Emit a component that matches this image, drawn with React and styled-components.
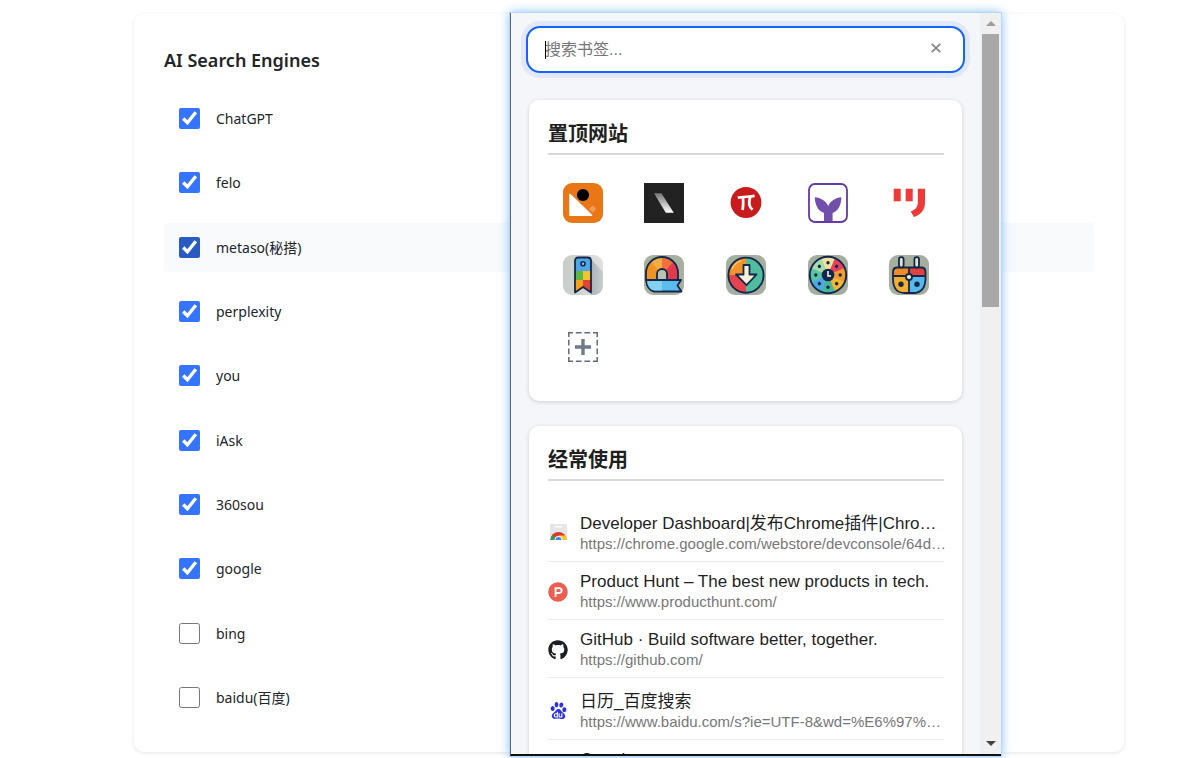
import React, {useState} from 'react';
import styled, {createGlobalStyle} from 'styled-components';
import {FaGithub, FaProductHunt} from 'react-icons/fa';
import {SiBaidu} from 'react-icons/si';

const NAVY = '#14264a';

const engines = [
    {id: 'chatgpt', label: 'ChatGPT', on: true},
    {id: 'felo', label: 'felo', on: true},
    {id: 'metaso', label: 'metaso(秘搭)', on: true, active: true},
    {id: 'perplexity', label: 'perplexity', on: true},
    {id: 'you', label: 'you', on: true},
    {id: 'iask', label: 'iAsk', on: true},
    {id: '360sou', label: '360sou', on: true},
    {id: 'google', label: 'google', on: true},
    {id: 'bing', label: 'bing', on: false},
    {id: 'baidu', label: 'baidu(百度)', on: false},
];

const bookmarks = [
    {
        title: 'Developer Dashboard|发布Chrome插件|Chrome Web Store',
        url: 'https://chrome.google.com/webstore/devconsole/64d0c1f8',
        icon: <WebStoreIcon/>,
        tall: true,
    },
    {
        title: 'Product Hunt – The best new products in tech.',
        url: 'https://www.producthunt.com/',
        icon: <FaProductHunt size={20} color="#ec5f50"/>,
    },
    {
        title: 'GitHub · Build software better, together.',
        url: 'https://github.com/',
        icon: <FaGithub size={20} color="#1b1f23"/>,
    },
    {
        title: '日历_百度搜索',
        url: 'https://www.baidu.com/s?ie=UTF-8&wd=%E6%97%A5%E5%8E%86',
        icon: <SiBaidu size={17} color="#2a32e0"/>,
        tall: true,
    },
    {
        title: 'Google',
        url: 'https://www.google.com/',
        icon: null,
    },
];

const sites = [
    {name: 'Shapes', Icon: ShapesIcon},
    {name: 'Slash', Icon: SlashIcon},
    {name: 'Pi', Icon: PiIcon},
    {name: 'Whale', Icon: WhaleIcon},
    {name: 'Strokes', Icon: StrokesIcon},
    {name: 'Bookmark', Icon: BookmarkIcon},
    {name: 'Arch', Icon: ArchIcon},
    {name: 'Download', Icon: DownloadIcon},
    {name: 'Clock', Icon: ClockIcon},
    {name: 'Calendar', Icon: CalendarIcon},
];

function WebStoreIcon() {
    return (
        <svg width="17" height="16" viewBox="0 0 17 16">
            <path d="M0 0H17V16H0Z" fill="#e6e6e6"/>
            <rect x="5" y="2" width="7" height="1.6" rx=".8" fill="#fff"/>
            <path d="M.5 16A8 8 0 0 1 16.5 16Z" fill="#d93a2e"/>
            <path d="M.5 16A8 8 0 0 1 2.6 10.8L6 16Z" fill="#2f9e4f"/>
            <path d="M8.5 11.6H15.2A8 8 0 0 1 16.5 16H9Z" fill="#f9c623"/>
            <path d="M4.6 16A3.9 3.9 0 0 1 12.4 16Z" fill="#fff"/>
            <path d="M5.5 16A3 3 0 0 1 11.5 16Z" fill="#4a83f0"/>
        </svg>
    );
}

function ShapesIcon() {
    return (
        <SiteSvg viewBox="0 0 40 40">
            <rect width="40" height="40" rx="9" fill="#e97716"/>
            <path d="M29.7 22.2L33.4 25.9L29.7 29.6L26 25.9Z" fill="#f09c55"/>
            <path d="M7 11.5V32.3H28.5Z" fill="#fff" stroke="#fff" strokeWidth="1.6" strokeLinejoin="round"/>
            <circle cx="20" cy="12" r="6.1" fill="#000"/>
        </SiteSvg>
    );
}

function SlashIcon() {
    return (
        <SiteSvg viewBox="0 0 40 40">
            <defs>
                <linearGradient id="slash" x1="0" y1="0" x2="0" y2="1">
                    <stop offset="0" stopColor="#777"/>
                    <stop offset="1" stopColor="#fff"/>
                </linearGradient>
            </defs>
            <rect width="40" height="40" fill="#222"/>
            <path d="M10 10.3H17.4L29.8 29.8H21.8Z" fill="url(#slash)"/>
        </SiteSvg>
    );
}

function PiIcon() {
    return (
        <SiteSvg viewBox="0 0 40 40">
            <circle cx="20" cy="19.5" r="15.4" fill="#c71b1c"/>
            <g fill="none" stroke="#fff">
                <path d="M11.8 14.8C16 13.4 23 14 28.6 12.9" strokeWidth="2.6"/>
                <path d="M16.8 14.4C17.6 18 17.2 22.5 16.6 27" strokeWidth="2.8"/>
                <path d="M24.2 14C22.6 19 22.4 24 26.6 26.6" strokeWidth="2.8"/>
            </g>
        </SiteSvg>
    );
}

function WhaleIcon() {
    return (
        <SiteSvg viewBox="0 0 40 40">
            <rect x="1" y="1" width="38" height="38" rx="6" fill="#fff" stroke="#6439a8" strokeWidth="1.8"/>
            <path d="M16 38V30C10 28 7 22 6.8 14.3C13 14.8 18 18 20.2 23C22.4 18 27.4 14.8 33.4 14.3C33.2 22 30.4 28 24.6 30V38Z" fill="#7150ab"/>
        </SiteSvg>
    );
}

function StrokesIcon() {
    return (
        <SiteSvg viewBox="0 0 40 40">
            <g fill="#f03a38">
                <rect x="4.7" y="5.7" width="7" height="12.6"/>
                <rect x="16.7" y="5.7" width="7" height="12.6"/>
                <path d="M28.8 5.7H36V19C36 27 32 31.6 25 34L21.8 28.4C26.6 26.6 28.8 24 28.8 19Z"/>
            </g>
        </SiteSvg>
    );
}

function BookmarkIcon() {
    return (
        <SiteSvg viewBox="0 0 40 40">
            <defs>
                <linearGradient id="stone" x1="0" y1="0" x2="1" y2="0">
                    <stop offset="0" stopColor="#c6cdc8"/>
                    <stop offset="1" stopColor="#dfe0df"/>
                </linearGradient>
                <linearGradient id="shade" x1="0" y1="0" x2="1" y2="0">
                    <stop offset="0" stopColor="#a7b0b4"/>
                    <stop offset="1" stopColor="#c9cdce"/>
                </linearGradient>
                <clipPath id="tile"><rect width="40" height="40" rx="9"/></clipPath>
                <clipPath id="ribbon"><path d="M12 6Q12 2.5 15.5 2.5H24.5Q28 2.5 28 6V37.6L20 32L12 37.6Z"/></clipPath>
            </defs>
            <g clipPath="url(#tile)">
                <rect width="40" height="40" fill="url(#stone)"/>
                <path d="M27 3L40 17V40H28Z" fill="url(#shade)"/>
                <g clipPath="url(#ribbon)">
                    <rect x="11" width="18" height="16" fill="#4ea6e6"/>
                    <rect x="11" y="16" width="9" height="9" fill="#62b646"/>
                    <rect x="20" y="16" width="9" height="9" fill="#f3c52c"/>
                    <rect x="11" y="25" width="9" height="14" fill="#f5a31f"/>
                    <rect x="20" y="25" width="9" height="14" fill="#e04434"/>
                </g>
                <path d="M12 6Q12 2.5 15.5 2.5H24.5Q28 2.5 28 6V37.6L20 32L12 37.6Z" fill="none" stroke={NAVY} strokeWidth="1.8" strokeLinejoin="round"/>
                <circle cx="20" cy="8.8" r="2" fill="#8ccbf2" stroke={NAVY} strokeWidth="1.6"/>
            </g>
        </SiteSvg>
    );
}

function ArchIcon() {
    return (
        <SiteSvg viewBox="0 0 40 40">
            <rect width="40" height="40" rx="9" fill="#a6b19f"/>
            <path d="M2 25V18A16 16 0 0 1 18 2V14A5 5 0 0 0 13 19V25Z" fill="#f09322"/>
            <path d="M7 7Q12 2 18 2V14Q16 14 14.5 15.5Z" fill="#f6ab45"/>
            <path d="M18 2A16 16 0 0 1 34 18V25H23V19A5 5 0 0 0 18 14Z" fill="#e23b4d"/>
            <path d="M18 2Q24.5 2 29.5 7L21.5 15.5Q20 14 18 14Z" fill="#f2703d"/>
            <path d="M13 25V19A5 5 0 0 1 23 19V25Z" fill="#b9c2b0"/>
            <g fill="none" stroke={NAVY} strokeWidth="1.8" strokeLinejoin="round">
                <path d="M2 25V18A16 16 0 0 1 34 18V25"/>
                <path d="M13 25V19A5 5 0 0 1 23 19V25"/>
            </g>
            <path d="M2 25H37L33.5 30.5L37.5 36.5H10Q3 35 2 25Z" fill="#5cbcec" stroke={NAVY} strokeWidth="1.8" strokeLinejoin="round"/>
            <path d="M18 26V35.6H10.5Q5 34 3.5 29V26Z" fill="#82d0f2"/>
        </SiteSvg>
    );
}

function DownloadIcon() {
    return (
        <SiteSvg viewBox="0 0 40 40">
            <rect width="40" height="40" rx="9" fill="#a4af9f"/>
            <path d="M20 2.5A17.6 17.6 0 0 0 2.4 20H20Z" fill="#f0952a"/>
            <path d="M2.4 20A17.6 17.6 0 0 0 20 37.7V20Z" fill="#e6434f"/>
            <path d="M20 2.5A17.6 17.6 0 0 1 20 37.7Z" fill="#50bd9f"/>
            <circle cx="20" cy="20.2" r="17.6" fill="none" stroke={NAVY} strokeWidth="1.9"/>
            <path d="M6 14A15.5 15.5 0 0 1 15 5.6" fill="none" stroke="#f9c676" strokeWidth="1.2"/>
            <path d="M17.5 10H23.5V19.5H30.5L20.5 30.2L10 19.5H17.5Z" fill="#f6f0da" stroke={NAVY} strokeWidth="1.8" strokeLinejoin="round"/>
        </SiteSvg>
    );
}

const wheelColors = ['#f3e3a0', '#e6405a', '#f39a32', '#f2b534', '#45b79c', '#4ea8e4', '#59c5a5', '#a5dcae'];

function ClockIcon() {
    return (
        <SiteSvg viewBox="0 0 40 40">
            <rect width="40" height="40" rx="9" fill="#a3ae9f"/>
            {wheelColors.map((color, i) => (
                <g key={color} transform={`rotate(${i * 45} 20 20)`}>
                    <path d="M20 20L13 3A18.4 18.4 0 0 1 27 3Z" fill={color}/>
                    <circle cx="20" cy="7.8" r="1.7" fill={NAVY}/>
                </g>
            ))}
            <circle cx="20" cy="20" r="18.2" fill="none" stroke={NAVY} strokeWidth="1.9"/>
            <circle cx="20" cy="20" r="6.3" fill={NAVY}/>
            <path d="M20 16V21H23" fill="none" stroke="#fff" strokeWidth="1.5"/>
        </SiteSvg>
    );
}

function CalendarIcon() {
    return (
        <SiteSvg viewBox="0 0 40 40">
            <defs>
                <clipPath id="calBody"><path d="M4 17Q4 12.5 8.5 12.5H32Q36.5 12.5 36.5 17V24Q36 38 24 38H16Q4 38 4 24Z"/></clipPath>
            </defs>
            <rect width="40" height="40" rx="9" fill="#a4af9f"/>
            <g clipPath="url(#calBody)">
                <rect x="3" y="12" width="17" height="9" fill="#ee8d25"/>
                <rect x="20" y="12" width="17" height="9" fill="#e2423f"/>
                <rect x="3" y="21" width="17" height="18" fill="#f3ae2f"/>
                <rect x="20" y="21" width="17" height="18" fill="#55b9ec"/>
            </g>
            <g stroke={NAVY} strokeWidth="1.8">
                <path d="M4 17Q4 12.5 8.5 12.5H32Q36.5 12.5 36.5 17V24Q36 38 24 38H16Q4 38 4 24Z" fill="none"/>
                <path d="M4 21H36.5M20 12.5V38" fill="none"/>
                <rect x="10" y="2.2" width="4.6" height="10.3" rx="2.3" fill="#dfe5d6"/>
                <rect x="25.4" y="2.2" width="4.6" height="10.3" rx="2.3" fill="#dfe5d6"/>
                <circle cx="20" cy="22" r="3" fill="#f6f0da"/>
            </g>
            <circle cx="12" cy="29.3" r="2.7" fill={NAVY}/>
            <circle cx="28" cy="29.3" r="2.7" fill={NAVY}/>
        </SiteSvg>
    );
}

function AddIcon() {
    return (
        <svg width="30" height="30" viewBox="0 0 30 30" fill="none">
            <path
                d="M0 .8H30M0 29.2H30M.8 0V30M29.2 0V30"
                stroke="#5f6c80"
                strokeWidth="1.5"
                strokeDasharray="5 2.8 5.8 2.8 5.8 2.8 5 100"
            />
            <path d="M15 7V23M7 15H23" stroke="#6f7b8a" strokeWidth="3.4"/>
        </svg>
    );
}

function EngineList() {
    const [checked, setChecked] = useState(engines.filter(e => e.on).map(e => e.id));
    const toggle = (id) => {
        setChecked(checked.includes(id) ? checked.filter(c => c !== id) : [...checked, id]);
    };
    return (
        <Card>
            <CardTitle>AI Search Engines</CardTitle>
            <Engines>
                {engines.map(({id, label, active}) => (
                    <Engine key={id} $active={active}>
                        <Check
                            type="checkbox"
                            id={id}
                            $active={active}
                            checked={checked.includes(id)}
                            onChange={() => toggle(id)}
                        />
                        <label htmlFor={id}>{label}</label>
                    </Engine>
                ))}
            </Engines>
        </Card>
    );
}

function BookmarkPopup() {
    const [query, setQuery] = useState('');
    return (
        <Popup>
            <PopupBody>
                <SearchBox>
                    <SearchInput
                        aria-label="搜索书签"
                        placeholder="搜索书签..."
                        value={query}
                        onChange={e => setQuery(e.target.value)}
                    />
                    {!query && <Caret/>}
                    <ClearButton type="button" aria-label="清除" onClick={() => setQuery('')}>
                        <svg width="10" height="10" viewBox="0 0 10 10">
                            <path d="M.8 .8L9.2 9.2M9.2 .8L.8 9.2" stroke="#888" strokeWidth="1.8"/>
                        </svg>
                    </ClearButton>
                </SearchBox>
                <Section>
                    <SectionTitle>置顶网站</SectionTitle>
                    <SiteGrid>
                        {sites.map(({name, Icon}) => (
                            <Site key={name} href="#" aria-label={name}><Icon/></Site>
                        ))}
                        <AddButton type="button" aria-label="添加"><AddIcon/></AddButton>
                    </SiteGrid>
                </Section>
                <Section>
                    <SectionTitle>经常使用</SectionTitle>
                    <BookmarkList>
                        {bookmarks.map(({title, url, icon, tall}) => (
                            <Bookmark key={title} href="#">
                                <Favicon>{icon}</Favicon>
                                <BookmarkText $tall={tall}>
                                    <BookmarkTitle>{title}</BookmarkTitle>
                                    <BookmarkUrl>{url}</BookmarkUrl>
                                </BookmarkText>
                            </Bookmark>
                        ))}
                    </BookmarkList>
                </Section>
            </PopupBody>
            <Scrollbar>
                <ScrollButton type="button" aria-label="up">
                    <svg width="10" height="5" viewBox="0 0 10 5"><path d="M0 5L5 0L10 5Z" fill="#9b9b9b"/></svg>
                </ScrollButton>
                <Track><Thumb/></Track>
                <ScrollButton type="button" aria-label="down">
                    <svg width="10" height="5" viewBox="0 0 10 5"><path d="M0 0L5 5L10 0Z" fill="#444"/></svg>
                </ScrollButton>
            </Scrollbar>
        </Popup>
    );
}

function App() {
    return (
        <>
            <GlobalStyle/>
            <Page>
                <EngineList/>
                <BookmarkPopup/>
            </Page>
        </>
    );
}

export default App;

const GlobalStyle = createGlobalStyle`
  * {
    box-sizing: border-box;
  }
  body {
    margin: 0;
    background: #fff;
    color: #212529;
    font-family: "Noto Sans", "Noto Sans CJK SC", sans-serif;
  }
  button {
    padding: 0;
    border: 0;
    background: none;
    cursor: pointer;
  }
  svg {
    display: block;
  }
`
const Page = styled.main`
  position: relative;
  display: flex;
  min-height: 100vh;
  padding: 14px 76px 6px 134px;
  overflow: hidden;
`
const Card = styled.section`
  flex: 1;
  display: flex;
  flex-direction: column;
  padding: 30px;
  border-radius: 10px;
  background: #fff;
  box-shadow: 0 1px 4px rgba(0, 0, 0, .1);
`
const CardTitle = styled.h2`
  margin: 0 0 18px;
  font-size: 18px;
  font-weight: 600;
  line-height: 32px;
`
const Engines = styled.div`
  flex: 1;
  display: flex;
  flex-direction: column;
  justify-content: space-between;
`
const Engine = styled.div`
  display: flex;
  align-items: center;
  gap: 16px;
  height: 49px;
  padding: 0 15px;
  border-radius: 4px;
  background: ${props => props.$active ? '#f8fafc' : 'transparent'};
  font-size: 14px;
`
const Check = styled.input`
  width: 21px;
  height: 21px;
  margin: 0;
  accent-color: ${props => props.$active ? '#285bc4' : '#3574ff'};
`

const Popup = styled.aside`
  position: absolute;
  top: 13px;
  bottom: 2px;
  right: 199px;
  width: 491px;
  display: flex;
  overflow: hidden;
  border-left: 1px solid #5b626b;
  border-bottom: 2px solid #111;
  background: #f5f6fa;
  box-shadow: 0 0 0 1px #b5d8ff, 0 0 10px rgba(60, 150, 255, .7);
  color: #1f1f1f;
  font-family: "Liberation Sans", "Noto Sans CJK SC", sans-serif;
`
const PopupBody = styled.div`
  flex: 1;
  min-width: 0;
  padding: 13px 18px 0;
`
const SearchBox = styled.div`
  position: relative;
  display: flex;
  align-items: center;
  height: 47px;
  margin: 0 -3px 27px;
  padding: 0 22px 0 17px;
  border: 2px solid #1463ff;
  border-radius: 14px;
  background: #fff;
  box-shadow: 0 0 0 5px #e1e8f9;
`
const SearchInput = styled.input`
  flex: 1;
  min-width: 0;
  padding: 0;
  border: 0;
  outline: 0;
  background: none;
  font-family: inherit;
  font-size: 16px;
  &::placeholder {
    color: #757575;
  }
`
const Caret = styled.span`
  position: absolute;
  left: 17px;
  width: 1px;
  height: 18px;
  background: #000;
`
const ClearButton = styled.button`
  padding: 0 0 4px;
`
const Section = styled.section`
  margin-bottom: 25px;
  padding: 19px 18px 24px 19px;
  border-radius: 10px;
  background: #fff;
  box-shadow: 0 1px 4px rgba(0, 0, 0, .16);
`
const SectionTitle = styled.h3`
  margin: 0 0 18px;
  padding-bottom: 4px;
  border-bottom: 2px solid #d6d8d9;
  font-size: 20px;
  font-weight: 700;
  line-height: 30px;
`
const SiteGrid = styled.div`
  display: grid;
  grid-template-columns: repeat(5, 1fr);
  grid-auto-rows: 60px;
  gap: 12px;
`
const Site = styled.a`
  display: flex;
  align-items: center;
  justify-content: center;
`
const SiteSvg = styled.svg`
  width: 40px;
  height: 40px;
`
const AddButton = styled.button`
  display: flex;
  align-items: center;
  justify-content: center;
`
const BookmarkList = styled.nav`
  padding-top: 1px;
`
const Bookmark = styled.a`
  display: flex;
  align-items: center;
  gap: 12px;
  padding: 10px 0 7px;
  border-bottom: 1px solid #ececec;
  color: inherit;
  text-decoration: none;
`
const Favicon = styled.span`
  display: flex;
  justify-content: center;
  width: 20px;
`
const BookmarkText = styled.span`
  flex: 1;
  min-width: 0;
  margin-right: -4px;
  padding-top: ${props => props.$tall ? '4px' : '0'};
`
const BookmarkTitle = styled.span`
  display: block;
  overflow: hidden;
  font-size: 17px;
  line-height: 20px;
  white-space: nowrap;
  text-overflow: ellipsis;
`
const BookmarkUrl = styled(BookmarkTitle)`
  color: #777;
  font-size: 15px;
`

const Scrollbar = styled.div`
  display: flex;
  flex-direction: column;
  width: 21px;
  background: #f0f0f0;
`
const ScrollButton = styled.button`
  display: flex;
  align-items: center;
  justify-content: center;
  height: 21px;
`
const Track = styled.div`
  flex: 1;
  padding: 0 2px;
`
const Thumb = styled.div`
  height: 39%;
  background: #a8a8a8;
`
